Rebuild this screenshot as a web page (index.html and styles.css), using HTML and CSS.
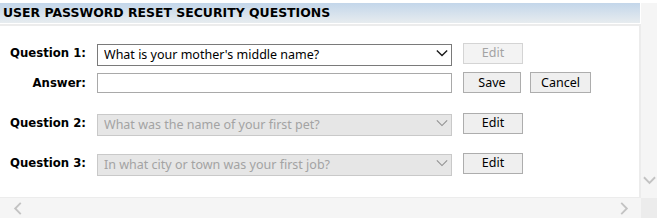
FILE: index.html
```html
<!DOCTYPE html>
<html lang="en">
<head>
  <meta charset="UTF-8">
  <title>User Password Reset Security Questions</title>
  <link rel="stylesheet" href="styles.css">
</head>
<body>
  <div class="window">
    <main class="viewport">
      <h1 class="section-title">USER PASSWORD RESET SECURITY QUESTIONS</h1>
      <form class="panel">
        <div class="qa-row row-q1">
          <label class="field-label" for="q1">Question 1:</label>
          <div class="select-wrap">
            <select id="q1" class="select">
              <option>What is your mother's middle name?</option>
            </select>
            <svg class="chevron" viewBox="0 0 14 9" aria-hidden="true"><path d="M1 1.5l6 6 6-6"/></svg>
          </div>
          <div class="actions">
            <button type="button" class="btn btn-edit" disabled>Edit</button>
          </div>
        </div>

        <div class="qa-row row-answer">
          <label class="field-label" for="a1">Answer:</label>
          <input id="a1" class="text-input" type="text">
          <div class="actions">
            <button type="button" class="btn btn-save">Save</button>
            <button type="button" class="btn btn-cancel">Cancel</button>
          </div>
        </div>

        <div class="qa-row row-q2">
          <label class="field-label" for="q2">Question 2:</label>
          <div class="select-wrap is-disabled">
            <select id="q2" class="select" disabled>
              <option>What was the name of your first pet?</option>
            </select>
            <svg class="chevron" viewBox="0 0 14 9" aria-hidden="true"><path d="M1 1.5l6 6 6-6"/></svg>
          </div>
          <div class="actions">
            <button type="button" class="btn btn-edit">Edit</button>
          </div>
        </div>

        <div class="qa-row row-q3">
          <label class="field-label" for="q3">Question 3:</label>
          <div class="select-wrap is-disabled">
            <select id="q3" class="select" disabled>
              <option>In what city or town was your first job?</option>
            </select>
            <svg class="chevron" viewBox="0 0 14 9" aria-hidden="true"><path d="M1 1.5l6 6 6-6"/></svg>
          </div>
          <div class="actions">
            <button type="button" class="btn btn-edit">Edit</button>
          </div>
        </div>
      </form>
    </main>

    <div class="vscroll">
      <svg class="scroll-arrow arrow-down" viewBox="0 0 14 9" aria-hidden="true"><path d="M1 1l6 6 6-6"/></svg>
    </div>
    <div class="hscroll">
      <svg class="scroll-arrow" viewBox="0 0 9 14" aria-hidden="true"><path d="M8 1L2 7l6 6"/></svg>
      <svg class="scroll-arrow" viewBox="0 0 9 14" aria-hidden="true"><path d="M1 1l6 6-6 6"/></svg>
    </div>
    <div class="corner"></div>
  </div>
</body>
</html>
```

FILE: styles.css
```css
/* Reset */
*, *::before, *::after {
  box-sizing: border-box;
  margin: 0;
  padding: 0;
}

:root {
  --label-font: "DejaVu Sans", Verdana, sans-serif;
  --ui-font: "Noto Sans", "Open Sans", sans-serif;
  --track: #f5f5f5;
  --arrow: #c3c3c3;
  --panel-border: #ececec;
}

body {
  background: #ffffff;
  color: #000000;
  padding-top: 3px;
  font-family: var(--ui-font);
}

/* Fake scrolling window */
.window {
  display: grid;
  grid-template-columns: 641px 16px;
  grid-template-rows: 195px 20px;
  height: 215px;
}

.viewport {
  overflow: hidden;
  display: flex;
  flex-direction: column;
}

.section-title {
  height: 20px;
  width: 640px;
  padding: 1px 0 0 3px;
  font-family: var(--label-font);
  font-size: 12.45px;
  font-weight: bold;
  line-height: 18px;
  color: #000;
  background: linear-gradient(to bottom, #c3d6ea, #e7ecef);
  white-space: nowrap;
}

.panel {
  flex: 1;
  margin-top: 1px;
  border-top: 2px solid var(--panel-border);
  border-right: 2px solid var(--panel-border);
  border-bottom: 1px solid var(--panel-border);
  padding-top: 16px;
}

/* Question rows */
.qa-row {
  display: grid;
  grid-template-columns: 86px 355px auto;
  column-gap: 11px;
  align-items: center;
}

.row-answer { margin-top: 8px; }
.row-q2 { margin-top: 19px; }
.row-q3 { margin-top: 18px; }

.field-label {
  text-align: right;
  font-family: var(--label-font);
  font-size: 11.7px;
  font-weight: bold;
  white-space: nowrap;
}

.select-wrap {
  position: relative;
  height: 22px;
}

.select {
  appearance: none;
  -webkit-appearance: none;
  width: 100%;
  height: 100%;
  padding: 0 24px 1px 6px;
  border: 1px solid #7a7a7a;
  background: #ffffff;
  color: #000;
  font-family: var(--ui-font);
  font-size: 12.5px;
}

.chevron {
  position: absolute;
  right: 4px;
  top: 7px;
  width: 12px;
  height: 8px;
  fill: none;
  stroke: #1a1a1a;
  stroke-width: 1.6;
  pointer-events: none;
}

.select-wrap.is-disabled .select {
  background: #e6e6e6;
  border-color: #c9c9c9;
  color: #a3a3a3;
  opacity: 1;
}

.select-wrap.is-disabled .chevron {
  stroke: #8f8f8f;
  stroke-width: 1.2;
}

.text-input {
  height: 20px;
  width: 100%;
  border: 1px solid #a9a9a9;
  background: #fff;
  font-family: var(--ui-font);
  font-size: 12.5px;
  padding: 0 4px;
}

.actions {
  display: flex;
  gap: 9px;
}

.btn {
  height: 21px;
  border: 1px solid #adadad;
  background: #efefef;
  color: #000;
  font-family: var(--ui-font);
  font-size: 12.5px;
  line-height: 18px;
}

.btn-edit { width: 60px; }
.btn-save { width: 58px; }
.btn-cancel { width: 61px; }

.btn:disabled {
  border-color: #d4d4d4;
  background: #f3f3f3;
  color: #a3a3a3;
}

/* Scrollbars */
.vscroll {
  background: var(--track);
  display: flex;
  align-items: flex-end;
  justify-content: center;
  padding-bottom: 13px;
}

.hscroll {
  background: var(--track);
  display: flex;
  justify-content: space-between;
  align-items: center;
  padding: 0 12px 0 13px;
}

.corner {
  background: #ececec;
}

.scroll-arrow {
  fill: none;
  stroke: var(--arrow);
  stroke-width: 2;
  width: 9px;
  height: 13px;
}

.arrow-down {
  width: 13px;
  height: 9px;
}
```
